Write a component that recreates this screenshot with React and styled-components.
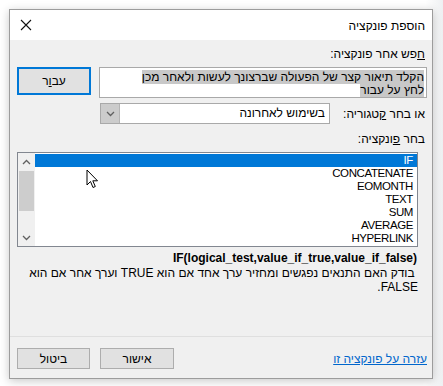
import React from "react";
import styled, { createGlobalStyle } from "styled-components";

const GlobalStyle = createGlobalStyle`
  html, body {
    margin: 0;
    padding: 0;
    background: #ffffff;
  }
  body {
    font-family: "Liberation Sans", "DejaVu Sans", sans-serif;
    font-size: 12px;
    color: #000;
  }
`;

const Page = styled.div`
  width: 443px;
  height: 386px;
  padding: 9px 0 0 9px;
  box-sizing: border-box;
  background: linear-gradient(to right, #ffffff 0, #ffffff 96%, #eef0f2 100%);
`;

const Dialog = styled.div`
  direction: rtl;
  width: 424px;
  height: 370px;
  box-sizing: border-box;
  border: 1px solid #9c9c9c;
  background: #f0f0f0;
  box-shadow: 0 2px 9px rgba(0, 0, 0, 0.22);
  display: flex;
  flex-direction: column;
`;

const TitleBar = styled.div`
  height: 30px;
  flex-shrink: 0;
  background: #ffffff;
  display: flex;
  align-items: center;
  justify-content: space-between;
  padding: 0 7px 0 10px;
`;

const Title = styled.span`
  font-size: 12px;
  padding-top: 2px;
`;

const Body = styled.div`
  flex: 1;
  display: flex;
  flex-direction: column;
  padding: 0 5px 0 7px;
`;

const Label = styled.div`
  line-height: 14px;
  margin-top: ${(p) => p.$top}px;
  padding-right: 2px;
`;

const Row = styled.div`
  display: flex;
  justify-content: space-between;
  align-items: flex-start;
  margin-top: ${(p) => p.$top}px;
`;

const SearchBox = styled.div`
  width: 328px;
  height: 31px;
  box-sizing: border-box;
  background: #fff;
  border: 1px solid #a9a9a9;
  padding: 3px 2px 0 0;
  line-height: 13px;
`;

const Selected = styled.span`
  background: #c8c8c8;
`;

const Button = styled.button`
  width: ${(p) => p.$w || 74}px;
  height: ${(p) => p.$h || 21}px;
  box-sizing: border-box;
  background: #e1e1e1;
  border: ${(p) => (p.$focused ? "2px solid #0078d7" : "1px solid #adadad")};
  font-family: inherit;
  font-size: 12px;
  color: #000;
  padding: 0;
  direction: rtl;
`;

const ComboRow = styled.div`
  display: flex;
  align-items: center;
  justify-content: space-between;
  width: 327px;
  margin-top: 5px;
`;

const Combo = styled.div`
  width: 230px;
  height: 21px;
  box-sizing: border-box;
  display: flex;
  border: 1px solid #a9a9a9;
  background: #fff;
`;

const ComboField = styled.div`
  flex: 1;
  line-height: 19px;
  padding-right: 4px;
`;

const ComboArrow = styled.div`
  width: 18px;
  background: #cccccc;
  border-right: 1px solid #b5b5b5;
  display: flex;
  align-items: center;
  justify-content: center;
`;

const ListBox = styled.div`
  position: relative;
  align-self: flex-end;
  width: 401px;
  height: 95px;
  box-sizing: border-box;
  margin-top: 6px;
  border: 1px solid #828790;
  background: #fff;
  display: flex;
`;

const Items = styled.div`
  flex: 1;
  padding-top: 1px;
`;

const Item = styled.div`
  height: 13px;
  line-height: 13px;
  font-size: 11.5px;
  padding-right: 4px;
  background: ${(p) => (p.$selected ? "#0078d7" : "transparent")};
  color: ${(p) => (p.$selected ? "#fff" : "#000")};
  letter-spacing: -0.4px;
`;

const ScrollBar = styled.div`
  width: 17px;
  background: #f0f0f0;
  display: flex;
  flex-direction: column;
  align-items: center;
`;

const ScrollArrow = styled.div`
  height: 17px;
  display: flex;
  align-items: center;
  justify-content: center;
`;

const ScrollThumb = styled.div`
  width: 15px;
  height: 40px;
  margin-top: 1px;
  background: #cdcdcd;
`;

const ScrollTrack = styled.div`
  flex: 1;
`;

const Cursor = styled.svg`
  position: absolute;
  left: 68px;
  top: 16px;
`;

const Syntax = styled.div`
  direction: ltr;
  text-align: right;
  font-weight: bold;
  line-height: 14px;
  margin-top: 4px;
  padding-right: 10px;
`;

const Description = styled.div`
  line-height: 14px;
  margin-top: 1px;
  padding-right: 9px;
`;

const Footer = styled.div`
  border-top: 1px solid #dfdfdf;
  margin-bottom: 0;
  padding: 11px 5px 9px 7px;
  display: flex;
  align-items: center;
  justify-content: space-between;
`;

const HelpLink = styled.a`
  color: #0066cc;
  text-decoration: underline;
  cursor: pointer;
`;

const ButtonGroup = styled.div`
  display: flex;
  gap: 10px;
`;

const Chevron = ({ up }) => (
  <svg width="9" height="6" viewBox="0 0 9 6">
    <path
      d={up ? "M1 5 L4.5 1.5 L8 5" : "M1 1 L4.5 4.5 L8 1"}
      fill="none"
      stroke="#606060"
      strokeWidth="1.3"
    />
  </svg>
);

const functions = ["IF", "CONCATENATE", "EOMONTH", "TEXT", "SUM", "AVERAGE", "HYPERLINK"];

export default function App() {
  return (
    <>
      <GlobalStyle />
      <Page>
        <Dialog>
          <TitleBar>
            <Title>הוספת פונקציה</Title>
            <svg width="12" height="12" viewBox="0 0 12 12">
              <path d="M1 1 L11 11 M11 1 L1 11" stroke="#111" strokeWidth="1.1" />
            </svg>
          </TitleBar>
          <Body>
            <Label $top={7}>
              <u>ח</u>פש אחר פונקציה:
            </Label>
            <Row $top={6}>
              <SearchBox>
                <Selected>הקלד תיאור קצר של הפעולה שברצונך לעשות ולאחר מכן</Selected>
                <br />
                <Selected>לחץ על עבור</Selected>
              </SearchBox>
              <Button $focused $h={28}>
                עב<u>ו</u>ר
              </Button>
            </Row>
            <ComboRow>
              <Label $top={0}>
                או בחר <u>ק</u>טגוריה:
              </Label>
              <Combo>
                <ComboField>בשימוש לאחרונה</ComboField>
                <ComboArrow>
                  <Chevron />
                </ComboArrow>
              </Combo>
            </ComboRow>
            <Label $top={8}>
              בחר <u>פ</u>ונקציה:
            </Label>
            <ListBox>
              <Items>
                {functions.map((f, i) => (
                  <Item key={f} $selected={i === 0}>
                    {f}
                  </Item>
                ))}
              </Items>
              <ScrollBar>
                <ScrollArrow>
                  <Chevron up />
                </ScrollArrow>
                <ScrollThumb />
                <ScrollTrack />
                <ScrollArrow>
                  <Chevron />
                </ScrollArrow>
              </ScrollBar>
              <Cursor width="13" height="21" viewBox="0 0 13 21">
                <path
                  d="M1 1 L1 16 L4.5 12.5 L7 18.5 L9.3 17.5 L6.8 11.8 L11.5 11.8 Z"
                  fill="#fff"
                  stroke="#000"
                  strokeWidth="1"
                  strokeLinejoin="round"
                />
              </Cursor>
            </ListBox>
            <Syntax>IF(logical_test,value_if_true,value_if_false)</Syntax>
            <Description>
              &nbsp;בודק האם התנאים נפגשים ומחזיר ערך אחד אם הוא TRUE וערך אחר אם הוא
              <br />
              FALSE.
            </Description>
          </Body>
          <Footer>
            <HelpLink>עזרה על פונקציה זו</HelpLink>
            <ButtonGroup>
              <Button>אישור</Button>
              <Button $w={73}>ביטול</Button>
            </ButtonGroup>
          </Footer>
        </Dialog>
      </Page>
    </>
  );
}
